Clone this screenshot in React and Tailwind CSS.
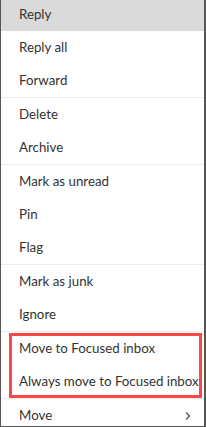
import React from 'react';

const groups = [
    ['Reply', 'Reply all', 'Forward'],
    ['Delete', 'Archive'],
    ['Mark as unread', 'Pin', 'Flag'],
    ['Mark as junk', 'Ignore'],
];

const Item = ({ label, active, chevron }) => (
    <div className={`h-[33px] flex items-center justify-between pl-[18px] pr-[12px] text-[13.3px] text-[#333] whitespace-nowrap ${active ? 'bg-[#dadada]' : 'bg-white'}`}>
        <span>{label}</span>
        {chevron && (
            <svg width="8" height="10" viewBox="0 0 8 10" className="text-[#555]">
                <path d="M2 1.5 L5.5 5 L2 8.5" fill="none" stroke="currentColor" strokeWidth="1.3" />
            </svg>
        )}
    </div>
);

export default function App() {
    return (
        <div className="w-[206px] h-[427px] overflow-hidden bg-white border-l border-r-2 border-b border-[#555]" style={{ fontFamily: 'Lato, "Open Sans", sans-serif' }}>
            <div className="-mt-[2px]">
                {groups.map((g, gi) => (
                    <div key={gi} className="border-b border-[#ededed]">
                        {g.map((label) => (
                            <Item key={label} label={label} active={label === 'Reply'} />
                        ))}
                    </div>
                ))}
                <div className="relative border-b border-[#ededed]">
                    <Item label="Move to Focused inbox" />
                    <Item label="Always move to Focused inbox" />
                    <div className="absolute left-[8px] right-[2px] top-[1px] bottom-[0px] border-[3px] border-[#ff4646] pointer-events-none" />
                </div>
                <Item label="Move" chevron />
            </div>
        </div>
    );
}
